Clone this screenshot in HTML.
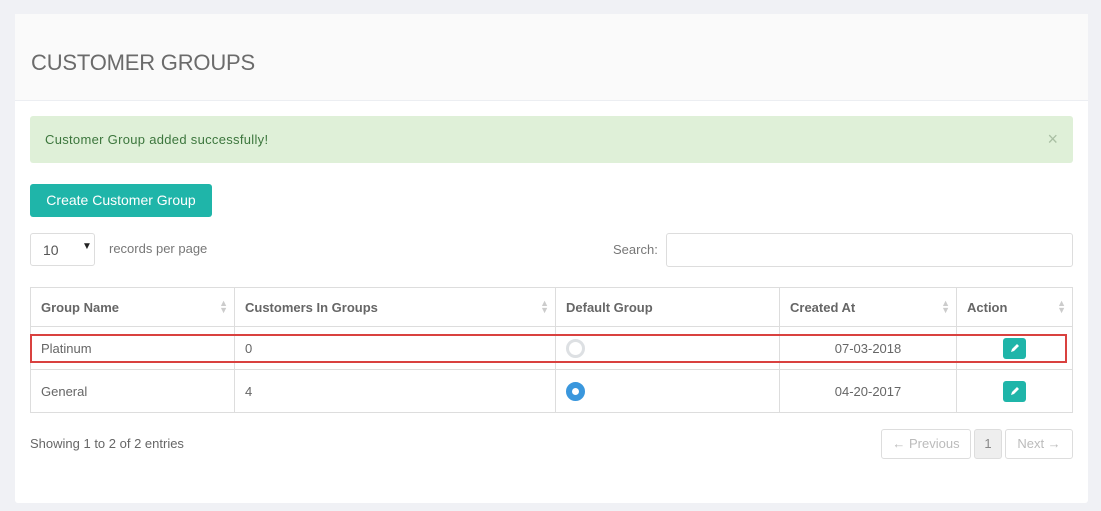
<!DOCTYPE html>
<html><head><style>
body{margin:0;background:#f0f1f5;font-family:"Liberation Sans",sans-serif;width:1101px;height:511px;overflow:hidden;position:relative;color:#666;}
.panel{position:absolute;left:15px;top:14px;width:1073px;height:489px;background:#fff;border-radius:3px;}
.hdr{position:absolute;left:0;top:0;width:1073px;height:86px;background:#fafafa;border-bottom:1px solid #eceef2;}
.hdr h1{position:absolute;left:16px;top:36px;margin:0;font-weight:normal;font-size:22px;color:#6b6b6b;letter-spacing:-0.2px;}
.abs{position:absolute;}
.alert{left:30px;top:116px;width:1043px;height:47px;background:#dff0d8;border-radius:3px;color:#3c763d;font-size:13px;}
.btn{left:30px;top:184px;width:182px;height:33px;background:#1fb5a9;border-radius:3px;color:#fff;font-size:14px;line-height:33px;text-align:center;}
.sel{left:30px;top:233px;width:63px;height:31px;border:1px solid #ddd;border-radius:3px;font-size:14px;color:#555;}
table{position:absolute;left:30px;top:287px;width:1043px;border-collapse:collapse;font-size:13px;}
td,th{border:1px solid #ddd;padding:0 10px;text-align:left;color:#666;}
th{height:38px;font-weight:bold;color:#666;position:relative;}
td{height:42px;}
.sort{position:absolute;right:6px;top:12px;font-size:9px;color:#ccc;line-height:7px;}
.ed{display:inline-block;width:23px;height:21px;background:#1fb5a9;border-radius:3px;vertical-align:middle;}
.pg{top:429px;height:28px;border:1px solid #ddd;border-radius:3px;font-size:13px;color:#bbb;line-height:28px;text-align:center;}
</style></head><body>
<div class="panel"><div class="hdr"><h1>CUSTOMER GROUPS</h1></div></div>
<div class="abs alert"><span class="abs" style="left:15px;top:16px;letter-spacing:0.3px">Customer Group added successfully!</span><span class="abs" style="right:15px;top:13px;font-size:18px;color:#a9bfa3">×</span></div>
<div class="abs btn">Create Customer Group</div>
<div class="abs sel"><span class="abs" style="left:12px;top:8px">10</span><span class="abs" style="left:51px;top:7px;font-size:10px;color:#222">▼</span></div>
<div class="abs" style="left:109px;top:241px;font-size:13px;color:#777">records per page</div>
<div class="abs" style="left:613px;top:242px;font-size:13px;color:#777">Search:</div>
<div class="abs" style="left:666px;top:233px;width:405px;height:32px;border:1px solid #ddd;border-radius:3px"></div>
<table>
<tr><th style="width:183px">Group Name<span class="sort">▲<br>▼</span></th><th style="width:300px">Customers In Groups<span class="sort">▲<br>▼</span></th><th style="width:203px">Default Group</th><th style="width:156px">Created At<span class="sort">▲<br>▼</span></th><th>Action<span class="sort">▲<br>▼</span></th></tr>
<tr><td>Platinum</td><td>0</td><td><span style="display:inline-block;width:13px;height:13px;border:3px solid #dde0e3;border-radius:50%;vertical-align:middle"></span></td><td style="text-align:center">07-03-2018</td><td style="text-align:center"><span class="ed"><svg width="23" height="21" viewBox="0 0 23 21"><path d="M8 14l1-3 5-5 2 2-5 5z" fill="#fff"/></svg></span></td></tr>
<tr><td>General</td><td>4</td><td><span style="display:inline-block;width:7px;height:7px;border:6px solid #3a97dd;border-radius:50%;vertical-align:middle;position:relative"></span></td><td style="text-align:center">04-20-2017</td><td style="text-align:center"><span class="ed"><svg width="23" height="21" viewBox="0 0 23 21"><path d="M8 14l1-3 5-5 2 2-5 5z" fill="#fff"/></svg></span></td></tr>
</table>
<div class="abs" style="left:30px;top:334px;width:1033px;height:25px;border:2px solid #d9413f"></div>
<div class="abs" style="left:30px;top:436px;font-size:13px;color:#666">Showing 1 to 2 of 2 entries</div>
<div class="abs pg" style="left:881px;width:88px">← Previous</div>
<div class="abs pg" style="left:974px;width:26px;background:#eee;color:#888">1</div>
<div class="abs pg" style="left:1005px;width:66px">Next →</div>
</body></html>
